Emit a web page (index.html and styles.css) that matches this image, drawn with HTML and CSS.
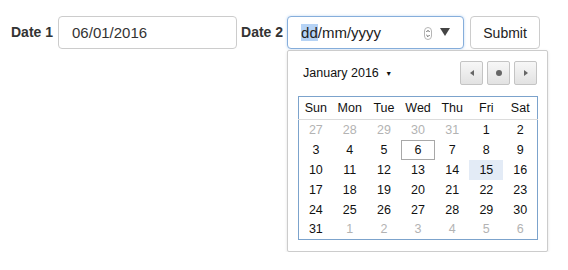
FILE: index.html
```html
<!DOCTYPE html>
<html lang="en">
<head>
  <meta charset="UTF-8" />
  <title>Date inputs</title>
  <link rel="stylesheet" href="styles.css">
</head>
<body>

<div class="date-form">
  <span class="lbl">Date 1</span>
  <input class="field field-1" type="text" value="06/01/2016">

  <span class="lbl lbl-2">Date 2</span>
  <div class="picker">
    <div class="field field-2">
      <span class="sel">dd</span>/mm/yyyy
      <span class="spin">
        <svg width="8" height="13" viewBox="0 0 8 13"><rect x="0.5" y="0.5" width="7" height="12" rx="3.5" fill="#fff" stroke="#b5b5b5"/><path d="M2.4 5 4 3.4 5.6 5M2.4 8 4 9.6 5.6 8" fill="none" stroke="#555" stroke-width="1"/></svg>
      </span>
      <span class="drop">
        <svg width="10" height="8" viewBox="0 0 10 8"><path d="M0 0H10L5 8Z" fill="#444"/></svg>
      </span>
    </div>

    <div class="popup">
      <div class="cal-head">
        <span class="month">January 2016 <small>▼</small></span>
        <div class="nav">
          <span class="nb"><span class="tri-l"></span></span>
          <span class="nb"><span class="dot"></span></span>
          <span class="nb"><span class="tri-r"></span></span>
        </div>
      </div>
      <table class="cal">
        <thead>
          <tr><th>Sun</th><th>Mon</th><th>Tue</th><th>Wed</th><th>Thu</th><th>Fri</th><th>Sat</th></tr>
        </thead>
        <tbody>
          <tr><td class="other">27</td><td class="other">28</td><td class="other">29</td><td class="other">30</td><td class="other">31</td><td>1</td><td>2</td></tr>
          <tr><td>3</td><td>4</td><td>5</td><td class="today">6</td><td>7</td><td>8</td><td>9</td></tr>
          <tr><td>10</td><td>11</td><td>12</td><td>13</td><td>14</td><td class="hover">15</td><td>16</td></tr>
          <tr><td>17</td><td>18</td><td>19</td><td>20</td><td>21</td><td>22</td><td>23</td></tr>
          <tr><td>24</td><td>25</td><td>26</td><td>27</td><td>28</td><td>29</td><td>30</td></tr>
          <tr><td>31</td><td class="other">1</td><td class="other">2</td><td class="other">3</td><td class="other">4</td><td class="other">5</td><td class="other">6</td></tr>
        </tbody>
      </table>
    </div>
  </div>

  <span class="btn">Submit</span>
</div>

</body>
</html>
```

FILE: styles.css
```css
* { box-sizing: border-box; }
body {
  margin: 0;
  font-family: "Liberation Sans", Arial, sans-serif;
  background: #fff;
  color: #111;
}
.date-form {
  display: flex;
  align-items: flex-start;
  padding: 16px 0 0 11px;
}
.date-form > * { flex: none; }
.lbl {
  font-weight: bold;
  font-size: 14px;
  line-height: 33px;
  white-space: nowrap;
  color: #333;
  margin-right: 5px;
}
.lbl-2 { margin-left: 4px; margin-right: 4px; }
.field {
  height: 33px;
  border: 1px solid #ccc;
  border-radius: 4px;
  font-family: inherit;
  font-size: 15px;
  color: #333;
  background: #fff;
}
.field-1 {
  width: 179px;
  padding: 0 0 0 13px;
  outline: none;
}
/* the popup is wider than the input and just hangs out to the right */
.picker {
  width: 177px;
  display: flex;
  flex-direction: column;
  align-items: flex-start;
}
.field-2 {
  width: 177px;
  display: flex;
  align-items: center;
  padding-left: 13px;
  border-color: #86aedb;
  box-shadow: 0 0 3px rgba(102,160,230,0.4);
  color: #222;
  white-space: nowrap;
}
.sel { background: #b6d3f5; }
.spin {
  display: flex;
  margin-left: 43px;
  margin-top: 1px;
}
.drop {
  display: flex;
  margin-left: 8px;
  margin-top: -2px;
}
.popup {
  flex: none;
  width: 261px;
  height: 202px;
  margin-top: 1px;
  background: #fff;
  border: 1px solid #ccc;
  border-radius: 2px;
  box-shadow: 0 1px 3px rgba(0,0,0,0.12);
  padding: 10px 10px 0 10px;
}
.cal-head {
  display: flex;
  justify-content: space-between;
  align-items: center;
  height: 24px;
  margin-bottom: 11px;
}
.month {
  font-size: 12.5px;
  color: #111;
  margin-left: 5px;
}
.month small { font-size: 7px; margin-left: 3px; vertical-align: 1px; }
.nav { display: flex; gap: 4px; }
.nb {
  width: 23px;
  height: 24px;
  border: 1px solid #c4c4c4;
  border-radius: 2px;
  background: linear-gradient(#f7f7f7, #e2e2e2);
  display: flex;
  align-items: center;
  justify-content: center;
}
.tri-l, .tri-r {
  width: 0; height: 0;
  border-top: 3px solid transparent;
  border-bottom: 3px solid transparent;
}
.tri-l { border-right: 4px solid #666; }
.tri-r { border-left: 4px solid #666; }
.dot { width: 6px; height: 6px; border-radius: 50%; background: #666; }
.cal {
  width: 240px;
  border-collapse: collapse;
  border: 1px solid #7ca3cc;
  font-size: 12.5px;
  table-layout: fixed;
}
.cal th {
  font-weight: normal;
  height: 23px;
  border-bottom: 1px solid #dcdcdc;
  color: #111;
}
.cal td {
  height: 20px;
  text-align: center;
  color: #111;
  padding: 0;
}
.cal td.other { color: #b3b3b3; }
.cal td.today { outline: 1px solid #a8a8a8; outline-offset: -1px; }
.cal td.hover { background: #e3ebf6; }
.btn {
  margin-left: 6px;
  height: 33px;
  width: 70px;
  line-height: 32px;
  text-align: center;
  border: 1px solid #ccc;
  border-radius: 4px;
  background: #fff;
  font-size: 14px;
  color: #222;
}
```
